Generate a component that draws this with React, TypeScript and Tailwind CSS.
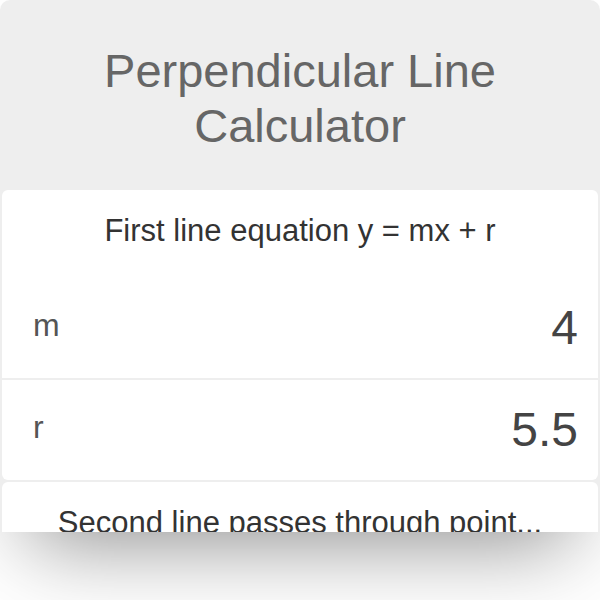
import React from 'react'

const font = "[font-family:'Liberation_Sans',Arial,sans-serif]"

const Row = ({ label, value }: { label: string; value: string }) => (
  <div className="flex h-[100px] items-center justify-between bg-white pl-[31px] pr-[20px]">
    <span className="mb-[6px] text-[32px] leading-[36px] text-[#555555]">{label}</span>
    <span className="text-[48px] leading-[56px] text-[#444444]">{value}</span>
  </div>
)

const App = () => {
  return (
    <div className={`h-[600px] w-[600px] overflow-hidden bg-white ${font}`}>
      <div className="flex h-[532px] flex-col gap-[2px] overflow-hidden rounded-t-[10px] bg-[#eeeeee] px-[2px] shadow-[0_40px_80px_-30px_rgba(0,0,0,0.45)]">
        <div className="h-[188px] shrink-0 pt-[43px] text-center text-[47px] leading-[55px] text-[#666666]">
          Perpendicular Line
          <br />
          Calculator
        </div>

        <div className="flex shrink-0 flex-col gap-[2px] overflow-hidden rounded-[6px]">
          <div className="bg-white">
            <div className="h-[88px] pt-[23px] text-center text-[31px] leading-[36px] text-[#333333]">
              First line equation y = mx + r
            </div>
            <Row label="m" value="4" />
          </div>
          <Row label="r" value="5.5" />
        </div>

        <div className="shrink-0 overflow-hidden rounded-[6px] bg-white">
          <div className="h-[88px] pt-[23px] text-center text-[31px] leading-[36px] text-[#333333]">
            Second line passes through point...
          </div>
        </div>
      </div>
    </div>
  )
}

export default App
